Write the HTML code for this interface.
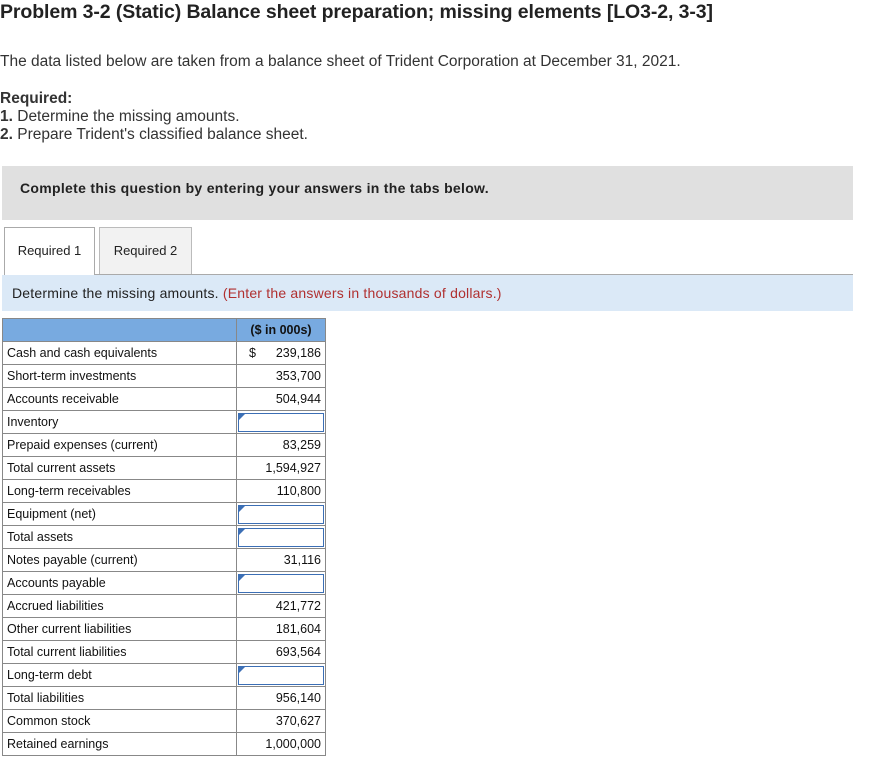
<!DOCTYPE html>
<html><head><style>
body{margin:0;background:#fff;font-family:"Liberation Sans",Arial,sans-serif;color:#222;width:870px;height:763px;overflow:hidden;position:relative}
.a{position:absolute}
h1{position:absolute;left:0;top:1px;margin:0;font-size:19.5px;font-weight:bold;color:#222;letter-spacing:-0.1px}
.p{font-size:15.5px;color:#333}
table{position:absolute;left:2px;top:318px;border-collapse:collapse;font-size:12.5px}
td{border:1px solid #888;height:23px;padding:0 4px;color:#111;box-sizing:border-box}
td.v{text-align:right;width:89px}
tr.h td{background:#78aae0;font-weight:bold;text-align:center;height:23px}
td.in{padding:0 1px}
.box{height:19px;border:1.5px solid #3c6fb5;position:relative;box-sizing:border-box}
.box:before{content:"";position:absolute;left:0;top:0;border-top:6px solid #3c6fb5;border-right:6px solid transparent}
</style></head><body>
<h1>Problem 3-2 (Static) Balance sheet preparation; missing elements [LO3-2, 3-3]</h1>
<div class="a p" style="left:0;top:53px">The data listed below are taken from a balance sheet of Trident Corporation at December 31, 2021.</div>
<div class="a p" style="left:0;top:90px;font-weight:bold">Required:</div>
<div class="a p" style="left:0;top:108px"><b>1.</b> Determine the missing amounts.</div>
<div class="a p" style="left:0;top:126px"><b>2.</b> Prepare Trident's classified balance sheet.</div>
<div class="a" style="left:2px;top:166px;width:851px;height:54px;background:#e0e0e0"></div>
<div class="a" style="left:20px;top:180px;font-size:14px;font-weight:bold;color:#222;letter-spacing:0.3px">Complete this question by entering your answers in the tabs below.</div>
<div class="a" style="left:4px;top:227px;width:91px;height:48px;border:1px solid #aaa;border-bottom:none;background:#fff;font-size:13px;text-align:center;line-height:46px;box-sizing:border-box;z-index:2">Required 1</div>
<div class="a" style="left:99px;top:227px;width:93px;height:47px;border:1px solid #bbb;border-bottom:none;background:#f2f2f2;font-size:13px;text-align:center;line-height:46px;box-sizing:border-box">Required 2</div>
<div class="a" style="left:4px;top:274px;width:849px;height:1px;background:#aaa"></div>
<div class="a" style="left:2px;top:275px;width:851px;height:36px;background:#dbe9f7"></div>
<div class="a" style="left:12px;top:285px;font-size:14px;color:#222;letter-spacing:0.2px">Determine the missing amounts. <span style="color:#b03030">(Enter the answers in thousands of dollars.)</span></div>
<table>
<tr class="h"><td style="width:234px"></td><td class="v" style="text-align:center">($ in 000s)</td></tr>
<tr><td>Cash and cash equivalents</td><td class="v"><span style="float:left;padding-left:8px">$</span>239,186</td></tr>
<tr><td>Short-term investments</td><td class="v">353,700</td></tr>
<tr><td>Accounts receivable</td><td class="v">504,944</td></tr>
<tr><td>Inventory</td><td class="in"><div class="box"></div></td></tr>
<tr><td>Prepaid expenses (current)</td><td class="v">83,259</td></tr>
<tr><td>Total current assets</td><td class="v">1,594,927</td></tr>
<tr><td>Long-term receivables</td><td class="v">110,800</td></tr>
<tr><td>Equipment (net)</td><td class="in"><div class="box"></div></td></tr>
<tr><td>Total assets</td><td class="in"><div class="box"></div></td></tr>
<tr><td>Notes payable (current)</td><td class="v">31,116</td></tr>
<tr><td>Accounts payable</td><td class="in"><div class="box"></div></td></tr>
<tr><td>Accrued liabilities</td><td class="v">421,772</td></tr>
<tr><td>Other current liabilities</td><td class="v">181,604</td></tr>
<tr><td>Total current liabilities</td><td class="v">693,564</td></tr>
<tr><td>Long-term debt</td><td class="in"><div class="box"></div></td></tr>
<tr><td>Total liabilities</td><td class="v">956,140</td></tr>
<tr><td>Common stock</td><td class="v">370,627</td></tr>
<tr><td>Retained earnings</td><td class="v">1,000,000</td></tr>
</table>
</body></html>
